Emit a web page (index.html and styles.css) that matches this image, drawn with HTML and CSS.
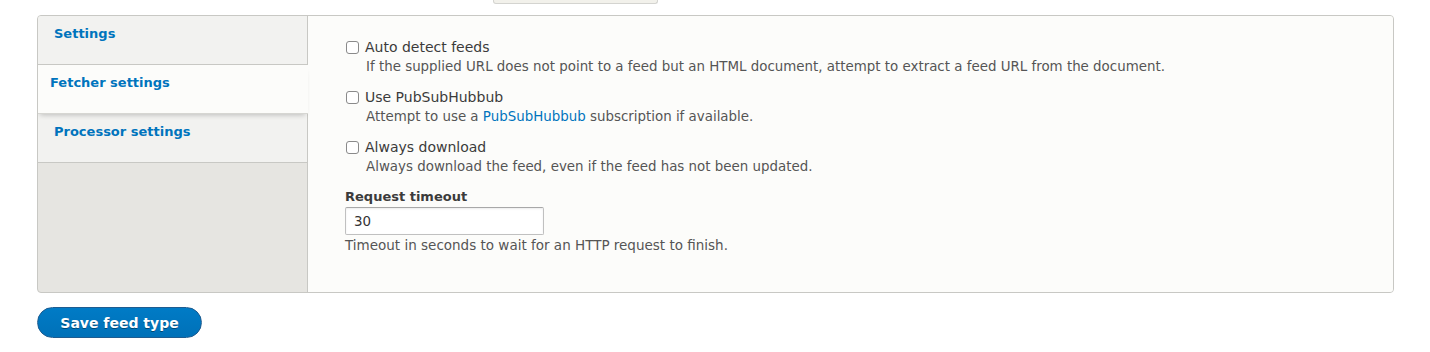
FILE: index.html
```html
<!DOCTYPE html>
<html>
<head>
<meta charset="utf-8">
<link rel="stylesheet" href="styles.css">
</head>
<body>
<div class="top"><div class="stub"></div></div>
<div class="vtabs">
  <ul class="menu">
    <li class="tab"><a href="#">Settings</a></li>
    <li class="tab selected"><a href="#">Fetcher settings</a></li>
    <li class="tab"><a href="#">Processor settings</a></li>
  </ul>
  <div class="pane">
    <div class="item">
      <label class="check"><input type="checkbox"><span>Auto detect feeds</span></label>
      <div class="desc">If the supplied URL does not point to a feed but an HTML document, attempt to extract a feed URL from the document.</div>
    </div>
    <div class="item">
      <label class="check"><input type="checkbox"><span>Use PubSubHubbub</span></label>
      <div class="desc">Attempt to use a <a href="#">PubSubHubbub</a> subscription if available.</div>
    </div>
    <div class="item">
      <label class="check"><input type="checkbox"><span>Always download</span></label>
      <div class="desc">Always download the feed, even if the feed has not been updated.</div>
    </div>
    <div class="field">
      <label class="flabel">Request timeout</label>
      <input class="text" type="text" value="30">
      <div class="fdesc">Timeout in seconds to wait for an HTTP request to finish.</div>
    </div>
  </div>
</div>
<div class="actions"><button class="btn">Save feed type</button></div>
</body>
</html>
```
FILE: styles.css
```css
* { box-sizing: border-box; }
body {
  margin: 0;
  background: #fff;
  font-family: "DejaVu Sans", "Liberation Sans", sans-serif;
  color: #333;
}
.top { height: 15px; }
.stub {
  margin-left: 493px;
  width: 165px;
  height: 4px;
  background: #f2f1eb;
  border: 1px solid #d4d4d0;
  border-top: none;
  border-radius: 0 0 3px 3px;
}
.vtabs {
  margin-left: 37px;
  width: 1357px;
  height: 278px;
  border: 1px solid #c8c8c4;
  border-radius: 4px;
  display: flex;
  background: #e6e5e1;
  overflow: hidden;
}
.menu {
  list-style: none;
  margin: 0;
  padding: 0;
  width: 270px;
  flex: none;
  border-right: 1px solid #c8c8c4;
}
.tab {
  height: 49px;
  background: #f2f2f0;
  border-bottom: 1px solid #c8c8c4;
  position: relative;
}
.tab a {
  display: block;
  padding: 8px 15px 0 16px;
  line-height: 20px;
  font-size: 13px;
  font-weight: bold;
  color: #0074bd;
  text-decoration: none;
}
.tab.selected {
  background: #fcfcfa;
  margin-right: -1px;
  margin-left: -1px;
  border-bottom: 1px solid #d6d6d2;
  box-shadow: 0 4px 5px -3px rgba(0,0,0,0.22);
  z-index: 1;
}
.tab.selected a { padding-left: 13px; }
.pane {
  flex: 1;
  background: #fcfcfa;
  padding: 21px 20px 20px 37px;
}
.item { margin-bottom: 10px; }
.check {
  display: flex;
  align-items: center;
  line-height: 20px;
  font-size: 14px;
  color: #3b3b3b;
}
.check input {
  appearance: none;
  -webkit-appearance: none;
  width: 13px;
  height: 13px;
  margin: 0 6px 0 1px;
  border: 1px solid #8a8a8a;
  border-radius: 3px;
  background: #fff;
}
.desc {
  padding-left: 21px;
  line-height: 20px;
  font-size: 13.4px;
  color: #555;
}
.desc a { color: #0074bd; text-decoration: none; }
.flabel {
  display: block;
  line-height: 20px;
  font-size: 13px;
  font-weight: bold;
  color: #3b3b3b;
}
.text {
  display: block;
  width: 199px;
  height: 28px;
  border: 1px solid #c0c0c0;
  border-top-color: #a8a8a8;
  border-radius: 2px;
  background: #fff;
  padding: 0 8px;
  font-family: "DejaVu Sans", sans-serif;
  font-size: 13.4px;
  color: #333;
  box-shadow: inset 0 1px 2px rgba(0,0,0,0.08);
}
.fdesc {
  line-height: 20px;
  font-size: 13.5px;
  color: #555;
}
.actions { padding: 14px 0 0 37px; }
.btn {
  width: 165px;
  height: 31px;
  border: 1px solid #1e5c90;
  border-radius: 16px;
  background: linear-gradient(to bottom, #007bc6, #0071b8);
  color: #fff;
  font-family: "DejaVu Sans", sans-serif;
  font-weight: bold;
  font-size: 14px;
  line-height: 28px;
  text-shadow: 0 1px rgba(0,0,0,0.4);
  padding: 0;
}
```
